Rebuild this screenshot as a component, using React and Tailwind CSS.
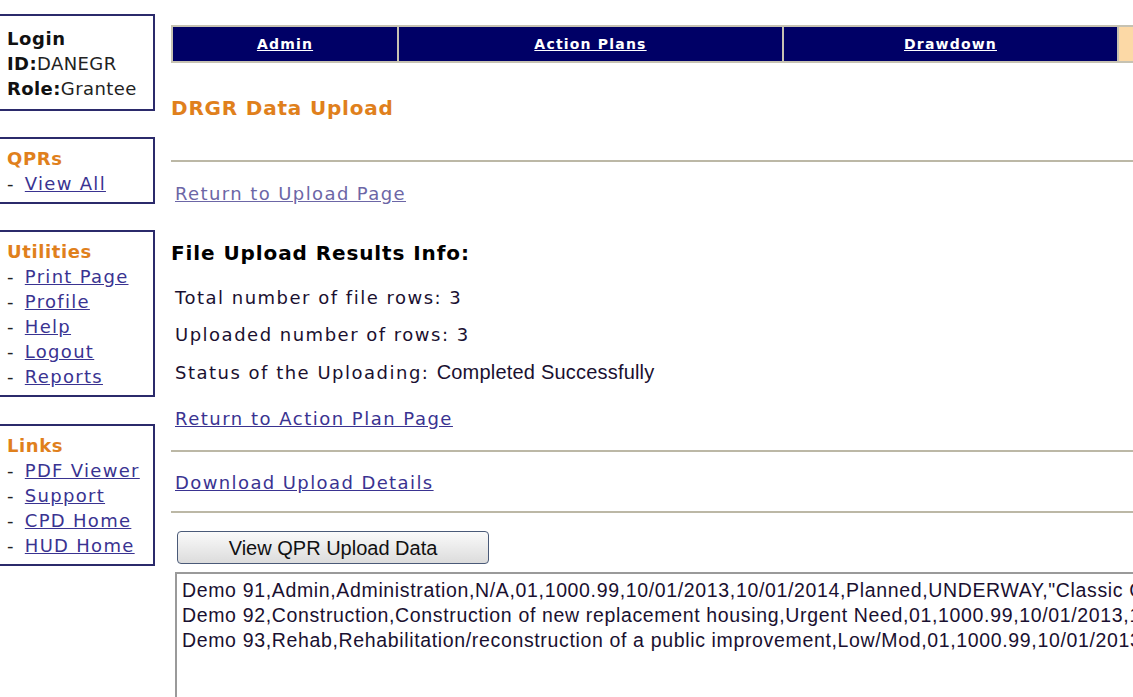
import React from "react";

const verdana = { fontFamily: '"DejaVu Sans", Verdana, sans-serif' };
const arial = { fontFamily: '"Liberation Sans", Arial, sans-serif' };

const SideBox = ({ title, children, className = "" }) => (
    <div className={`border-2 border-l-0 border-[#2b2a6b] w-[155px] pl-[7px] ${className}`}>
        {title && <div className="text-[#e0801c] font-bold leading-[24px] tracking-[0.6px]">{title}</div>}
        {children}
    </div>
);

const SideLink = ({ label }) => (
    <div className="leading-[25px] text-[#222] tracking-[1.3px] whitespace-nowrap">
        -<span className="inline-block w-[10px]" /><a href="#" className="text-[#3a3391] underline">{label}</a>
    </div>
);

const Rule = ({ className = "" }) => (
    <div className={`h-[2px] bg-[#bcb8a6] ${className}`} />
);

const App = () => {
    const lines = [
        'Demo 91,Admin,Administration,N/A,01,1000.99,10/01/2013,10/01/2014,Planned,UNDERWAY,"Classic Condos","123 Main St"',
        "Demo 92,Construction,Construction of new replacement housing,Urgent Need,01,1000.99,10/01/2013,10/01/2014,Planned",
        "Demo 93,Rehab,Rehabilitation/reconstruction of a public improvement,Low/Mod,01,1000.99,10/01/2013,10/01/2014,Planned",
    ];

    return (
        <div className="w-[1133px] h-[697px] overflow-hidden bg-white flex text-[18px]" style={verdana}>
            <div className="flex flex-col shrink-0 pt-[14px]">
                <SideBox className="pt-[10px] pb-[8px]">
                    <div className="leading-[25px] font-bold text-[#111] tracking-[0.6px]">Login</div>
                    <div className="leading-[25px] text-[#222] tracking-[0.4px]"><b className="text-[#111]">ID:</b>DANEGR</div>
                    <div className="leading-[25px] text-[#222] tracking-[0.4px]"><b className="text-[#111]">Role:</b>Grantee</div>
                </SideBox>
                <SideBox title="QPRs" className="mt-[26px] pt-[8px] pb-[6px]">
                    <SideLink label="View All" />
                </SideBox>
                <SideBox title="Utilities" className="mt-[26px] pt-[8px] pb-[6px]">
                    <SideLink label="Print Page" />
                    <SideLink label="Profile" />
                    <SideLink label="Help" />
                    <SideLink label="Logout" />
                    <SideLink label="Reports" />
                </SideBox>
                <SideBox title="Links" className="mt-[27px] pt-[8px] pb-[6px]">
                    <SideLink label="PDF Viewer" />
                    <SideLink label="Support" />
                    <SideLink label="CPD Home" />
                    <SideLink label="HUD Home" />
                </SideBox>
            </div>

            <div className="ml-[16px] flex-1 min-w-0 pt-[25px]">
                <div className="flex h-[38px] border-2 border-r-0 border-[#c6c2b2] bg-[#000066] text-white text-[14px] font-bold tracking-[1.2px]">
                    <div className="w-[226px] flex items-center justify-center border-r-2 border-[#c6c2b2]">
                        <a href="#" className="underline">Admin</a>
                    </div>
                    <div className="w-[385px] flex items-center justify-center border-r-2 border-[#c6c2b2]">
                        <a href="#" className="underline">Action Plans</a>
                    </div>
                    <div className="w-[335px] flex items-center justify-center border-r-2 border-[#c6c2b2]">
                        <a href="#" className="underline">Drawdown</a>
                    </div>
                    <div className="flex-1 bg-[#fcd9a6]" />
                </div>

                <h1 className="mt-[32px] text-[20px] font-bold text-[#e0801c] leading-[26px] tracking-[0.8px]">DRGR Data Upload</h1>

                <Rule className="mt-[39px]" />

                <div className="pl-[4px] mt-[19px] leading-[25px] tracking-[1.4px]">
                    <a href="#" className="text-[#6c66a6] underline">Return to Upload Page</a>
                </div>

                <h2 className="mt-[34px] text-[20px] font-bold text-black leading-[26px] tracking-[0.9px]">File Upload Results Info:</h2>

                <div className="pl-[4px] mt-[19px] flex flex-col text-[#1a1030] tracking-[1.5px]">
                    <div className="leading-[25px]">Total number of file rows: 3</div>
                    <div className="leading-[25px] mt-[12px]">Uploaded number of rows: 3</div>
                    <div className="leading-[25px] mt-[13px]">
                        Status of the Uploading:{" "}
                        <span className="text-[20px] tracking-[0.2px]" style={arial}>Completed Successfully</span>
                    </div>
                    <div className="leading-[25px] mt-[21px]">
                        <a href="#" className="text-[#3a3391] underline">Return to Action Plan Page</a>
                    </div>
                </div>

                <Rule className="mt-[19px]" />

                <div className="pl-[4px] mt-[18px] leading-[25px] tracking-[1.4px]">
                    <a href="#" className="text-[#3a3391] underline">Download Upload Details</a>
                </div>

                <Rule className="mt-[16px]" />

                <div className="pl-[6px] mt-[18px]">
                    <button
                        className="w-[312px] h-[33px] rounded-[4px] border border-[#4a5a78] bg-gradient-to-b from-[#fafafa] to-[#dcdcdc] text-[20px] text-[#111] leading-none"
                        style={arial}
                    >
                        View QPR Upload Data
                    </button>
                </div>

                <div
                    className="ml-[4px] mt-[8px] h-[160px] border-2 border-r-0 border-[#9a9a9a] pl-[5px] pt-[4px] overflow-hidden text-[19.5px] tracking-[0.65px] text-[#1a1030] whitespace-nowrap"
                    style={arial}
                >
                    {lines.map((l, i) => (
                        <div key={i} className="leading-[25px]">{l}</div>
                    ))}
                </div>
            </div>
        </div>
    );
};

export default App;
